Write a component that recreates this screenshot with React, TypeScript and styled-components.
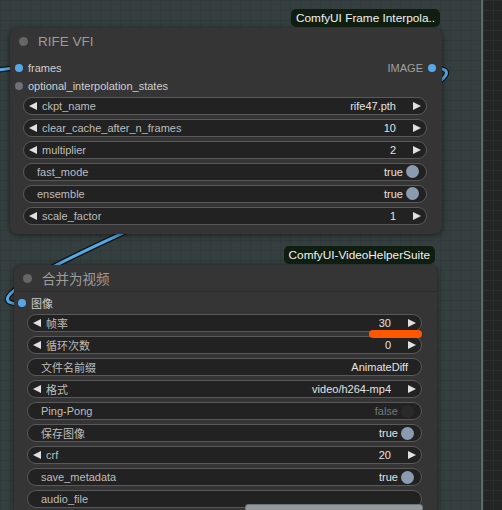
import React from "react";
import styled, { createGlobalStyle } from "styled-components";

const GlobalStyle = createGlobalStyle`
  html, body {
    margin: 0;
    padding: 0;
    background: #353e3e;
  }
  * {
    box-sizing: border-box;
  }
`;

const FONT = `"Liberation Sans", "Noto Sans CJK SC", Arial, sans-serif`;

const Viewport = styled.div`
  width: 502px;
  height: 510px;
  display: flex;
  overflow: hidden;
  font-family: ${FONT};
`;

const Canvas = styled.div`
  position: relative;
  flex: 0 0 481px;
  height: 100%;
  background-color: #363f3f;
  background-image: linear-gradient(to right, rgba(0, 0, 0, 0.07) 1px, transparent 1px),
    linear-gradient(to bottom, rgba(0, 0, 0, 0.07) 1px, transparent 1px);
  background-size: 10px 10px;
`;

const Divider = styled.div`
  flex: 0 0 2px;
  background: #5d6b6b;
`;

const SidePanel = styled.div`
  flex: 1;
  background-color: #232424;
  background-image: linear-gradient(to right, rgba(255, 255, 255, 0.04) 1px, transparent 1px),
    linear-gradient(to bottom, rgba(255, 255, 255, 0.04) 1px, transparent 1px);
  background-size: 10px 10px;
`;

const Wires = styled.svg`
  position: absolute;
  left: 0;
  top: 0;
  width: 481px;
  height: 510px;
  overflow: visible;
`;

const Node = styled.div<{ $x: number; $y: number; $w: number }>`
  position: absolute;
  left: ${({ $x }) => $x}px;
  top: ${({ $y }) => $y}px;
  width: ${({ $w }) => $w}px;
  background: #353535;
  border-radius: 8px;
  box-shadow: 0 1px 6px rgba(0, 0, 0, 0.55);
  padding: 0 15px 9px 13px;
`;

const Badge = styled.div`
  position: absolute;
  right: 2px;
  bottom: calc(100% + 1px);
  height: 18px;
  padding: 0 5px;
  display: flex;
  align-items: center;
  background: #0f1e10;
  border-radius: 5px;
  color: #f2f2f2;
  font-size: 11.8px;
  white-space: nowrap;
`;

const Title = styled.div<{ $line?: boolean }>`
  height: 27px;
  margin: 0 -15px 0 -13px;
  padding-left: 9px;
  display: flex;
  align-items: center;
  gap: 10px;
  color: #9c9c9c;
  font-size: 13.5px;
  border-bottom: ${({ $line }) => ($line ? "1px solid #2c2c2c" : "none")};
`;

const TitleDot = styled.span`
  width: 9px;
  height: 9px;
  border-radius: 50%;
  background: #666;
`;

const Slots = styled.div<{ $pad: number }>`
  padding-top: ${({ $pad }) => $pad}px;
  margin: 0 -15px 0 -13px;
`;

const SlotRow = styled.div`
  height: 18px;
  display: flex;
  align-items: center;
  justify-content: space-between;
  font-size: 11px;
`;

const SlotSide = styled.div`
  display: flex;
  align-items: center;
  gap: 5px;
`;

const SlotIn = styled(SlotSide)<{ $pad?: number }>`
  padding-left: ${({ $pad = 5 }) => $pad}px;
  color: #cfcfcf;
`;

const SlotOut = styled(SlotSide)`
  padding-right: 6px;
  color: #a0a0a0;
`;

const SlotDot = styled.span<{ $color: string }>`
  width: 8px;
  height: 8px;
  border-radius: 50%;
  background: ${({ $color }) => $color};
`;

const Widgets = styled.div<{ $top: number }>`
  margin-top: ${({ $top }) => $top}px;
  display: flex;
  flex-direction: column;
  gap: 4px;
`;

const WidgetRow = styled.div<{ $arrows: boolean }>`
  height: 18px;
  display: flex;
  align-items: center;
  background: #222222;
  border: 1px solid #595959;
  border-radius: 9px;
  padding: 0 ${({ $arrows }) => ($arrows ? 5 : 7)}px 0 ${({ $arrows }) => ($arrows ? 5 : 13)}px;
  font-size: 11px;
`;

const Label = styled.span`
  flex: 1;
  color: #bdbdbd;
  white-space: nowrap;
`;

const Value = styled.span<{ $off?: boolean; $gap: number }>`
  color: ${({ $off }) => ($off ? "#777" : "#e2e2e2")};
  margin-right: ${({ $gap }) => $gap}px;
  white-space: nowrap;
`;

const Arrow = styled.span<{ $dir: "left" | "right" }>`
  width: 0;
  height: 0;
  border-top: 4px solid transparent;
  border-bottom: 4px solid transparent;
  ${({ $dir }) =>
    $dir === "left"
      ? "border-right: 8.5px solid #e0e0e0; margin-right: 5px;"
      : "border-left: 8.5px solid #e0e0e0;"}
`;

const Knob = styled.span<{ $on: boolean }>`
  width: 13px;
  height: 13px;
  border-radius: 50%;
  background: ${({ $on }) => ($on ? "#8b9bb0" : "#2a2a2a")};
`;

const Marker = styled.div`
  position: absolute;
  left: 369px;
  top: 330px;
  width: 53px;
  height: 8px;
  border-radius: 4px;
  background: #ff5600;
`;

const Overlay = styled.div`
  position: absolute;
  left: 245px;
  top: 504px;
  width: 178px;
  height: 12px;
  background: #939a9e;
  border: 1px solid #6c7579;
  border-radius: 3px 3px 0 0;
`;

type WidgetKind = "combo" | "toggle" | "text";

interface WidgetProps {
  kind: WidgetKind;
  label: string;
  value?: string;
  on?: boolean;
}

const Widget = ({ kind, label, value, on = true }: WidgetProps) => {
  if (kind === "combo") {
    return (
      <WidgetRow $arrows>
        <Arrow $dir="left" />
        <Label>{label}</Label>
        <Value $gap={17}>{value}</Value>
        <Arrow $dir="right" />
      </WidgetRow>
    );
  }
  if (kind === "toggle") {
    return (
      <WidgetRow $arrows={false}>
        <Label>{label}</Label>
        <Value $gap={3} $off={!on}>
          {value}
        </Value>
        <Knob $on={on} />
      </WidgetRow>
    );
  }
  return (
    <WidgetRow $arrows={false}>
      <Label>{label}</Label>
      {value && <Value $gap={6}>{value}</Value>}
    </WidgetRow>
  );
};

const rifeWidgets: WidgetProps[] = [
  { kind: "combo", label: "ckpt_name", value: "rife47.pth" },
  { kind: "combo", label: "clear_cache_after_n_frames", value: "10" },
  { kind: "combo", label: "multiplier", value: "2" },
  { kind: "toggle", label: "fast_mode", value: "true" },
  { kind: "toggle", label: "ensemble", value: "true" },
  { kind: "combo", label: "scale_factor", value: "1" },
];

const videoWidgets: WidgetProps[] = [
  { kind: "combo", label: "帧率", value: "30" },
  { kind: "combo", label: "循环次数", value: "0" },
  { kind: "text", label: "文件名前缀", value: "AnimateDiff" },
  { kind: "combo", label: "格式", value: "video/h264-mp4" },
  { kind: "toggle", label: "Ping-Pong", value: "false", on: false },
  { kind: "toggle", label: "保存图像", value: "true" },
  { kind: "combo", label: "crf", value: "20" },
  { kind: "toggle", label: "save_metadata", value: "true" },
  { kind: "text", label: "audio_file" },
];

const WIRE = "#55aae6";

const Link = ({ d }: { d: string }) => (
  <g fill="none" strokeLinecap="round">
    <path d={d} stroke="rgba(10,14,16,0.85)" strokeWidth={5.5} />
    <path d={d} stroke={WIRE} strokeWidth={3} />
  </g>
);

export default function App() {
  return (
    <>
      <GlobalStyle />
      <Viewport>
        <Canvas>
          <Wires viewBox="0 0 481 510">
            <Link d="M -40 76 C -12 76 -8 68 19 68" />
            <Link d="M 432 68 C 550 68 -97 304 22 304" />
          </Wires>

          <Node $x={10} $y={28} $w={432}>
            <Badge>ComfyUI Frame Interpola..</Badge>
            <Title>
              <TitleDot />
              RIFE VFI
            </Title>
            <Slots $pad={4}>
              <SlotRow>
                <SlotIn>
                  <SlotDot $color="#55a9ea" />
                  frames
                </SlotIn>
                <SlotOut>
                  IMAGE
                  <SlotDot $color="#55a9ea" />
                </SlotOut>
              </SlotRow>
              <SlotRow>
                <SlotIn>
                  <SlotDot $color="#6f6f78" />
                  optional_interpolation_states
                </SlotIn>
              </SlotRow>
            </Slots>
            <Widgets $top={1.5}>
              {rifeWidgets.map((w) => (
                <Widget key={w.label} {...w} />
              ))}
            </Widgets>
          </Node>

          <Node $x={14} $y={265} $w={423}>
            <Badge>ComfyUI-VideoHelperSuite</Badge>
            <Title $line>
              <TitleDot />
              合并为视频
            </Title>
            <Slots $pad={2}>
              <SlotRow>
                <SlotIn $pad={4}>
                  <SlotDot $color="#55a9ea" />
                  图像
                </SlotIn>
              </SlotRow>
            </Slots>
            <Widgets $top={2}>
              {videoWidgets.map((w) => (
                <Widget key={w.label} {...w} />
              ))}
            </Widgets>
          </Node>

          <Marker />
          <Overlay />
        </Canvas>
        <Divider />
        <SidePanel />
      </Viewport>
    </>
  );
}
